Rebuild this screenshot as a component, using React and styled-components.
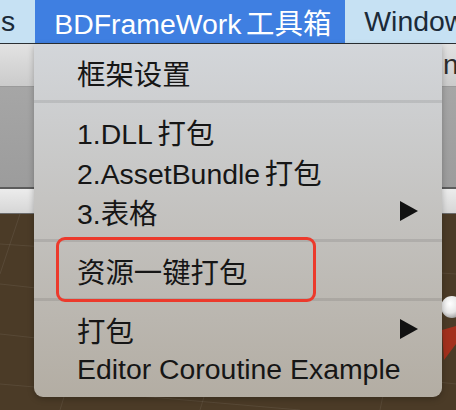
import styled, { createGlobalStyle } from 'styled-components'

const GlobalStyle = createGlobalStyle`
  html, body {
    margin: 0;
    padding: 0;
    width: 456px;
    height: 410px;
    overflow: hidden;
    background: #4b3b27;
  }
`;

const FONT = `"Liberation Sans", "Noto Sans CJK SC", sans-serif`;

// six-per-em space: the small gap macOS puts between Latin and CJK text
const GAP = '\u2006';

const menuGroups = [
  [{ label: '框架设置' }],
  [
    { label: `1.DLL${GAP}打包` },
    { label: `2.AssetBundle${GAP}打包` },
    { label: '3.表格', sub: true },
  ],
  [{ label: '资源一键打包' }],
  [
    { label: '打包', sub: true },
    { label: 'Editor Coroutine Example' },
  ],
];

const Arrow = () => (
  <svg width="18" height="20" viewBox="0 0 18 20">
    <polygon points="0,0 18,10 0,20" fill="#111" />
  </svg>
);

const SceneDrawing = () => (
  <svg width="456" height="196" viewBox="0 0 456 196">
    <g stroke="rgba(255,255,255,0.07)" strokeWidth="1">
      <line x1="0" y1="30" x2="456" y2="60" />
      <line x1="0" y1="70" x2="456" y2="120" />
      <line x1="0" y1="120" x2="456" y2="170" />
      <line x1="0" y1="170" x2="300" y2="196" />
      <line x1="20" y1="0" x2="0" y2="60" />
      <line x1="120" y1="0" x2="60" y2="196" />
      <line x1="260" y1="0" x2="200" y2="196" />
      <line x1="420" y1="0" x2="380" y2="196" />
    </g>
    <defs>
      <radialGradient id="ball" cx="0.4" cy="0.35" r="0.7">
        <stop offset="0" stopColor="#ffffff" />
        <stop offset="0.6" stopColor="#e6e6e6" />
        <stop offset="1" stopColor="#9a9a9a" />
      </radialGradient>
    </defs>
    <circle cx="452" cy="93" r="11" fill="url(#ball)" />
    <polygon points="442,116 456,112 456,130 444,146" fill="#a3301d" />
  </svg>
);

const App = () => {
  return (
    <>
      <GlobalStyle />
      <Screen>
        <MenuBar>
          <BarTitle $edge>s</BarTitle>
          <BarTitle $active>{`BDFrameWork${GAP}工具箱`}</BarTitle>
          <BarTitle>Window</BarTitle>
        </MenuBar>

        <ToolStrip>
          <TabText>na</TabText>
        </ToolStrip>
        <GrayPanel />
        <LightStrip />
        <Scene>
          <SceneDrawing />
        </Scene>

        <Dropdown>
          {menuGroups.map((group, gi) => (
            <Group key={gi}>
              {gi > 0 && <Separator />}
              {group.map((item) => (
                <Item key={item.label}>
                  <span>{item.label}</span>
                  {item.sub && <Arrow />}
                </Item>
              ))}
            </Group>
          ))}
          <Highlight />
        </Dropdown>
      </Screen>
    </>
  );
};

export default App;

const Screen = styled.div`
  position: relative;
  width: 456px;
  height: 410px;
  display: flex;
  flex-direction: column;
  overflow: hidden;
  font-family: ${FONT};
`;

const MenuBar = styled.div`
  display: flex;
  height: 44px;
  background: #c6e1f3;
  border-bottom: 1px solid #2b2f33;
  box-sizing: border-box;
  overflow: hidden;
`;

const BarTitle = styled.div`
  display: flex;
  align-items: center;
  flex-shrink: 0;
  padding: ${(p) => (p.$active ? '0 14px 0 19px' : p.$edge ? '0 20px 0 1px' : '0 19px')};
  font-size: 28.4px;
  color: ${(p) => (p.$active ? '#ffffff' : '#1b2a38')};
  background: ${(p) => (p.$active ? '#3f7fe1' : 'transparent')};
  white-space: nowrap;
`;

const ToolStrip = styled.div`
  height: 44px;
  display: flex;
  align-items: center;
  padding-left: 443px;
  background: linear-gradient(#e2e2e2, #cbcbcb);
  border-bottom: 1px solid #9a9a9a;
  box-sizing: border-box;
  overflow: hidden;
`;

const TabText = styled.span`
  font-size: 28px;
  color: #2c2c2c;
  white-space: nowrap;
`;

const GrayPanel = styled.div`
  height: 101px;
  background: linear-gradient(#a6a6a6, #9c9c9c);
  border-bottom: 2px solid #5c5c5c;
`;

const LightStrip = styled.div`
  height: 24px;
  background: linear-gradient(#ececec, #d6d6d6);
  border-bottom: 1px solid #6b6b6b;
`;

const Scene = styled.div`
  flex: 1;
  background: #4b3b27;
  display: flex;
  align-items: flex-start;
`;

const Dropdown = styled.div`
  position: absolute;
  left: 34px;
  top: 44px;
  width: 408px;
  box-sizing: border-box;
  padding: 8px 0 8px;
  display: flex;
  flex-direction: column;
  background: linear-gradient(#d3d6da, #b3ada3);
  border-radius: 0 0 9px 9px;
  box-shadow: 0 2px 6px rgba(0, 0, 0, 0.25);
`;

const Group = styled.div`
  display: flex;
  flex-direction: column;
`;

const Separator = styled.div`
  height: 3px;
  margin: 8px 0 8px;
  background: rgba(0, 0, 0, 0.09);
`;

const Item = styled.div`
  height: 40px;
  display: flex;
  align-items: center;
  justify-content: space-between;
  padding: 0 24px 0 43px;
  font-size: 28.4px;
  color: #161616;
  white-space: nowrap;
`;

const Highlight = styled.div`
  position: absolute;
  left: 22px;
  top: 193px;
  width: 260px;
  height: 65px;
  box-sizing: border-box;
  border: 3px solid #ec3a2c;
  border-radius: 9px;
`;
